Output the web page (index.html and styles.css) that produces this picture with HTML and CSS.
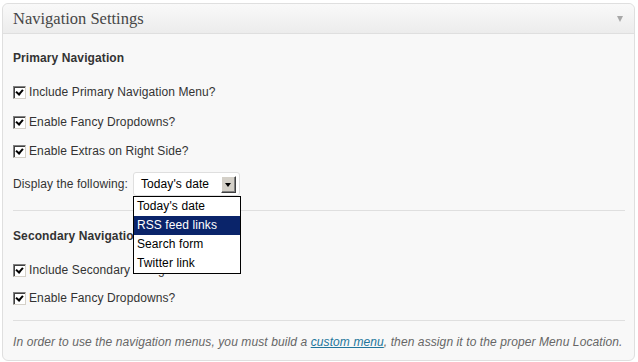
FILE: index.html
```html
<!DOCTYPE html>
<html lang="en">
<head>
    <meta charset="UTF-8">
    <meta name="viewport" content="width=device-width, initial-scale=1.0">
    <title>Navigation Settings</title>
    <link rel="stylesheet" href="styles.css">
</head>
<body>
    <div class="postbox">
        <div class="postbox-head">
            <h3>Navigation Settings</h3>
            <span class="toggle"></span>
        </div>

        <div class="inside">
            <h4 class="group-title">Primary Navigation</h4>
            <label class="check-row"><input type="checkbox" checked>Include Primary Navigation Menu?</label>
            <label class="check-row"><input type="checkbox" checked>Enable Fancy Dropdowns?</label>
            <label class="check-row tight"><input type="checkbox" checked>Enable Extras on Right Side?</label>

            <div class="display-row">
                <span>Display the following:</span>
                <div class="fake-select">
                    <span class="current">Today's date</span>
                    <span class="arrow-btn"><span class="arrow"></span></span>

                    <!-- open dropdown list -->
                    <ul class="select-list">
                        <li>Today's date</li>
                        <li class="selected">RSS feed links</li>
                        <li>Search form</li>
                        <li>Twitter link</li>
                    </ul>
                </div>
            </div>

            <hr class="first-rule">

            <h4 class="group-title second">Secondary Navigation</h4>
            <label class="check-row"><input type="checkbox" checked>Include Secondary Navigation Menu?</label>
            <label class="check-row short"><input type="checkbox" checked>Enable Fancy Dropdowns?</label>

            <hr class="last-rule">

            <p class="note">In order to use the navigation menus, you must build a <a href="#">custom menu</a>, then assign it to the proper Menu Location.</p>
        </div>
    </div>
</body>
</html>
```

FILE: styles.css
```css
body {
    margin: 0;
    background-color: #ffffff;
    font-family: "Liberation Sans", Arial, sans-serif;
    font-size: 12px;
    letter-spacing: 0.1px;
    color: #333;
}

.postbox {
    margin: 3px 3px 0 2px;
    border: 1px solid #dfdfdf;
    border-radius: 6px;
    background-color: #f8f8f8;
    box-sizing: border-box;
    height: 358px;
}

.postbox-head {
    display: flex;
    align-items: center;
    height: 29px;
    padding: 0 10px;
    border-bottom: 1px solid #dfdfdf;
    border-radius: 6px 6px 0 0;
    background: linear-gradient(to bottom, #f9f9f9, #ececec);
}

.postbox-head h3 {
    margin: 0;
    font-family: "Liberation Serif", "Times New Roman", serif;
    font-size: 16.5px;
    font-weight: normal;
    letter-spacing: 0;
    color: #464646;
}

.toggle {
    margin-left: auto;
    margin-right: 1px;
    width: 0;
    height: 0;
    border-left: 3.5px solid transparent;
    border-right: 3.5px solid transparent;
    border-top: 6px solid #a8a8a8;
}

.inside {
    padding: 16px 9px 11px 10px;
    display: flex;
    flex-direction: column;
    align-items: flex-start;
}

.group-title {
    margin: 0;
    font-size: 12px;
    line-height: 16px;
    font-weight: bold;
    color: #333;
}

.group-title.second {
    margin-top: 17px;
}

.check-row {
    display: flex;
    align-items: center;
    height: 16px;
    margin-top: 14px;
    line-height: 16px;
}

.group-title + .check-row {
    margin-top: 18px;
}

.group-title.second + .check-row {
    margin-top: 18px;
}

.check-row.tight {
    margin-top: 13px;
}

.check-row.short {
    margin-top: 12px;
}

/* classic windows style checkbox */
.check-row input {
    appearance: none;
    -webkit-appearance: none;
    position: relative;
    margin: 0 3px 0 0;
    width: 13px;
    height: 13px;
    border: 1px solid #808080;
    border-right-color: #d4d0c8;
    border-bottom-color: #d4d0c8;
    box-shadow: inset 1px 1px 0 #404040;
    background: #fff;
    box-sizing: border-box;
}

.check-row input:checked::after {
    content: "";
    position: absolute;
    left: 3px;
    top: 1px;
    width: 3px;
    height: 5px;
    border-right: 2px solid #000;
    border-bottom: 2px solid #000;
    transform: rotate(40deg);
}

.display-row {
    display: flex;
    align-items: center;
    margin-top: 13px;
}

.fake-select {
    position: relative;
    display: flex;
    align-items: center;
    margin-left: 5px;
    width: 107px;
    height: 24px;
    box-sizing: border-box;
    border: 1px solid #dfdfdf;
    border-radius: 3px;
    background: #fff;
    color: #000;
}

.fake-select .current {
    padding-left: 7px;
}

.arrow-btn {
    display: flex;
    align-items: center;
    justify-content: center;
    margin-left: auto;
    margin-right: 3px;
    width: 15px;
    height: 17px;
    box-sizing: border-box;
    background: #d4d0c8;
    border: 1px solid;
    border-color: #fff #404040 #404040 #fff;
    box-shadow: inset -1px -1px 0 #808080;
}

.arrow {
    width: 0;
    height: 0;
    border-left: 3.5px solid transparent;
    border-right: 3.5px solid transparent;
    border-top: 4px solid #000;
    margin-top: 1px;
}

.select-list {
    position: absolute;
    top: 23px;
    left: -1px;
    width: 108px;
    margin: 0;
    padding: 0;
    list-style: none;
    box-sizing: border-box;
    border: 1px solid #000;
    background: #fff;
    z-index: 2;
}

.select-list li {
    height: 19px;
    line-height: 19px;
    padding-left: 3px;
    color: #000;
}

.select-list li.selected {
    background: #0a246a;
    color: #fff;
}

hr {
    align-self: stretch;
    margin: 14px 0 0 0;
    border: 0;
    border-top: 1px solid #dfdfdf;
    height: 0;
}

hr.last-rule {
    margin-top: 14px;
}

.note {
    margin: 13px 0 0 0;
    line-height: 16px;
    font-style: italic;
    color: #666;
}

.note a {
    color: #21759b;
}
```
